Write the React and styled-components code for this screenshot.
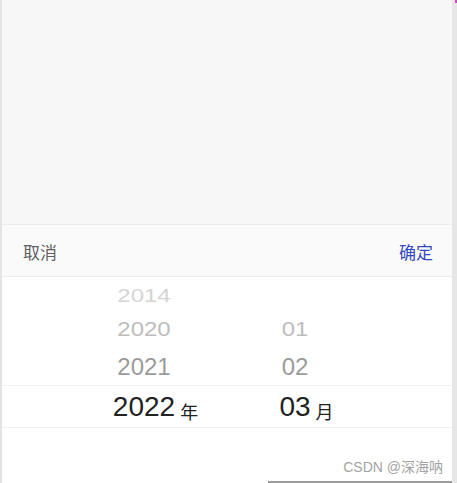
import React from "react";
import styled, { createGlobalStyle } from "styled-components";

const GlobalStyle = createGlobalStyle`
  html, body {
    margin: 0;
    padding: 0;
    background: #ffffff;
  }
  body {
    font-family: "Liberation Sans", "Noto Sans CJK SC", sans-serif;
  }
`;

const CJK = `"Noto Sans CJK SC", "Liberation Sans", sans-serif`;
const NUM = `"Liberation Sans", "Noto Sans CJK SC", sans-serif`;

const Frame = styled.div`
  display: flex;
  width: 457px;
  height: 483px;
  overflow: hidden;
`;

const LeftEdge = styled.div`
  width: 2px;
  background: #e4e4e4;
`;

const RightEdge = styled.div`
  width: 5px;
  background: #e6e6e6;
  display: flex;
  justify-content: flex-end;
`;

const Marker = styled.div`
  width: 2px;
  height: 3px;
  background: #d23fd6;
`;

const Main = styled.div`
  width: 450px;
  display: flex;
  flex-direction: column;
`;

const Mask = styled.div`
  height: 224px;
  background: #f7f7f7;
`;

const Toolbar = styled.div`
  height: 51px;
  display: flex;
  align-items: center;
  justify-content: space-between;
  padding: 0 19px 0 21px;
  background: #fafafa;
  border-top: 1px solid #ececec;
  border-bottom: 1px solid #ececec;
  font-family: ${CJK};
  font-size: 17px;
`;

const ToolButton = styled.span`
  color: ${(p) => (p.$primary ? "#3349c2" : "#5f5f5f")};
  margin-top: 1px;
`;

const Picker = styled.div`
  flex: 1;
  display: flex;
  flex-direction: column;
  background: #ffffff;
`;

const Columns = styled.div`
  display: grid;
  grid-template-columns: 66px 152px 150px 1fr;
`;

const Wheel = styled.div`
  display: flex;
  flex-direction: column;
`;

const Spacer = styled.div``;

const Item = styled.div`
  height: ${(p) => p.$h}px;
  display: flex;
  align-items: ${(p) => (p.$clip ? "flex-end" : "center")};
  justify-content: center;
  font-family: ${NUM};
  font-size: 24px;
  line-height: 1;
  color: ${(p) => p.$color};
  transform: scaleY(${(p) => p.$squash});
  overflow: hidden;
`;

const SelectedBand = styled(Columns)`
  height: 41px;
  border-top: 1px solid #f0f0f0;
  border-bottom: 1px solid #f0f0f0;
`;

const SelectedCell = styled.div`
  display: flex;
  align-items: center;
  justify-content: center;
`;

const Value = styled.span`
  position: relative;
  font-family: ${NUM};
  font-size: 28px;
  color: #222222;
  line-height: 1;
  margin-top: 1px;
`;

const Unit = styled.span`
  position: absolute;
  left: 100%;
  bottom: 1px;
  margin-left: 5px;
  font-family: ${CJK};
  font-size: 18px;
  color: #222222;
  white-space: nowrap;
`;

const Footer = styled.div`
  flex: 1;
  display: flex;
  flex-direction: column;
  justify-content: flex-end;
`;

const Watermark = styled.div`
  align-self: flex-end;
  padding-right: 9px;
  margin-bottom: 5px;
  font-family: ${NUM};
  font-size: 14px;
  color: #a3a3a3;
  span {
    font-family: ${CJK};
  }
`;

const HomeBar = styled.div`
  height: 2px;
  margin-left: 266px;
  background: #9d9d9d;
`;

const years = [
  { v: "2014", h: 32, color: "#d4d4d4", squash: 0.75, clip: true },
  { v: "2020", h: 40, color: "#bdbdbd", squash: 0.88 },
  { v: "2021", h: 36, color: "#9b9b9b", squash: 0.98 },
];

const months = [
  { v: "", h: 32, color: "#d4d4d4", squash: 1 },
  { v: "01", h: 40, color: "#bdbdbd", squash: 0.88 },
  { v: "02", h: 36, color: "#9b9b9b", squash: 0.98 },
];

const WheelColumn = ({ items }) => (
  <Wheel>
    {items.map((it, i) => (
      <Item
        key={i}
        $h={it.h}
        $color={it.color}
        $squash={it.squash}
        $clip={it.clip}
      >
        {it.v}
      </Item>
    ))}
  </Wheel>
);

export default function App() {
  return (
    <>
      <GlobalStyle />
      <Frame>
        <LeftEdge />
        <Main>
          <Mask />
          <Toolbar>
            <ToolButton>取消</ToolButton>
            <ToolButton $primary>确定</ToolButton>
          </Toolbar>
          <Picker>
            <Columns>
              <Spacer />
              <WheelColumn items={years} />
              <WheelColumn items={months} />
              <Spacer />
            </Columns>
            <SelectedBand>
              <Spacer />
              <SelectedCell>
                <Value>
                  2022<Unit>年</Unit>
                </Value>
              </SelectedCell>
              <SelectedCell>
                <Value>
                  03<Unit>月</Unit>
                </Value>
              </SelectedCell>
              <Spacer />
            </SelectedBand>
            <Footer>
              <Watermark>
                CSDN @<span>深海呐</span>
              </Watermark>
              <HomeBar />
            </Footer>
          </Picker>
        </Main>
        <RightEdge>
          <Marker />
        </RightEdge>
      </Frame>
    </>
  );
}
